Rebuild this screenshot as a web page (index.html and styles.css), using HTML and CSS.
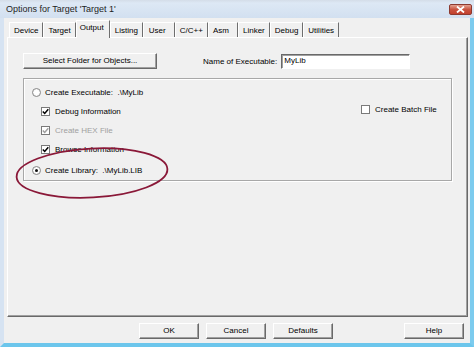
FILE: index.html
```html
<!DOCTYPE html>
<html lang="en">
<head>
    <meta charset="UTF-8">
    <title>Options for Target 'Target 1'</title>
    <link rel="stylesheet" href="styles.css">
</head>
<body>
    <div class="window">
        <div class="titlebar">
            <span class="title">Options for Target 'Target 1'</span>
            <span class="close">
                <svg width="9" height="7" viewBox="0 0 9 7"><path d="M1 0.5 L8 6.5 M8 0.5 L1 6.5" stroke="#fff" stroke-width="1.8"/></svg>
            </span>
        </div>
        <div class="frame">
            <div class="client">
                <div class="tabs">
                    <div class="tab">Device</div>
                    <div class="tab">Target</div>
                    <div class="tab active">Output</div>
                    <div class="tab">Listing</div>
                    <div class="tab wide">User</div>
                    <div class="tab">C/C++</div>
                    <div class="tab">Asm</div>
                    <div class="tab">Linker</div>
                    <div class="tab">Debug</div>
                    <div class="tab">Utilities</div>
                </div>

                <div class="panel">
                    <div class="top-row">
                        <div class="btn folder-btn">Select Folder for Objects...</div>
                        <span class="exe-label">Name of Executable:</span>
                        <div class="textbox">MyLib</div>
                    </div>

                    <div class="group">
                        <div class="options">
                            <div class="row">
                                <span class="radio"></span>
                                <span>Create Executable:&nbsp; .\MyLib</span>
                            </div>
                            <div class="row sub">
                                <span class="check"><svg width="7" height="7" viewBox="0 0 7 7"><path d="M0.8 3.4 L2.7 5.4 L6.3 1.2" fill="none" stroke="#000" stroke-width="1.5"/></svg></span>
                                <span>Debug Information</span>
                            </div>
                            <div class="row sub disabled">
                                <span class="check"><svg width="7" height="7" viewBox="0 0 7 7"><path d="M0.8 3.4 L2.7 5.4 L6.3 1.2" fill="none" stroke="#a0a0a0" stroke-width="1.5"/></svg></span>
                                <span>Create HEX File</span>
                            </div>
                            <div class="row sub">
                                <span class="check"><svg width="7" height="7" viewBox="0 0 7 7"><path d="M0.8 3.4 L2.7 5.4 L6.3 1.2" fill="none" stroke="#000" stroke-width="1.5"/></svg></span>
                                <span>Browse Information</span>
                            </div>
                            <div class="row lib">
                                <span class="radio on"></span>
                                <span>Create Library:&nbsp; .\MyLib.LIB</span>
                            </div>
                        </div>
                        <div class="side">
                            <div class="row">
                                <span class="check"></span>
                                <span>Create Batch File</span>
                            </div>
                        </div>
                    </div>
                </div>

                <div class="footer">
                    <div class="btn">OK</div>
                    <div class="btn">Cancel</div>
                    <div class="btn">Defaults</div>
                    <div class="btn help">Help</div>
                </div>
            </div>
        </div>

        <!-- hand drawn marker round the library option -->
        <svg class="marker" width="474" height="347" viewBox="0 0 474 347">
            <ellipse cx="92" cy="173" rx="75.5" ry="24.5" transform="rotate(-3 92 173)" fill="none" stroke="#8a1838" stroke-width="1.8"/>
        </svg>
    </div>
</body>
</html>
```

FILE: styles.css
```css
body {
    margin: 0;
    font-family: "Liberation Sans", Arial, sans-serif;
    font-size: 8px;
    color: #000;
}

.window {
    position: relative;
    width: 474px;
    height: 347px;
    display: flex;
    flex-direction: column;
    overflow: hidden;
}

.titlebar {
    height: 18px;
    flex: none;
    display: flex;
    align-items: flex-start;
    padding: 0 2px 0 6px;
    background: linear-gradient(#d4dde8 0, #dde8f5 3px, #d2e0f0 18px);
    box-sizing: border-box;
}

.title {
    font-size: 9px;
    line-height: 18px;
    color: #1e1e1e;
}

.close {
    margin-left: auto;
    margin-top: 4px;
    width: 23px;
    height: 11px;
    display: flex;
    align-items: center;
    justify-content: center;
    background: linear-gradient(#e3a291, #c9533f 50%, #c2402e);
    border: 1px solid #8c3a30;
    border-radius: 2px;
    box-sizing: border-box;
}

.frame {
    flex: 1;
    border-left: 4px solid #d6e3f2;
    border-right: 4px solid #7ccbee;
    border-bottom: 4px solid #6cc6ec;
    display: flex;
}

.client {
    flex: 1;
    background-color: #f0f0f0;
    padding: 0 2px 0 3px;
    display: flex;
    flex-direction: column;
}

/* tab strip */
.tabs {
    height: 19px;
    padding-left: 2px;
    display: flex;
    align-items: flex-end;
    box-sizing: border-box;
}

.tab {
    height: 15px;
    min-width: 30px;
    padding: 0 4px 0 4px;
    line-height: 15px;
    border-top: 1px solid #fff;
    border-left: 1px solid #fff;
    border-right: 1px solid #6e6e6e;
    box-sizing: border-box;
    background-color: #f0f0f0;
}

.tab.wide {
    min-width: 32px;
    padding-left: 5px;
}

.tab.active {
    position: relative;
    z-index: 1;
    height: 18px;
    margin-bottom: -1px;
    line-height: 14px;
    padding: 0 5px 0 3px;
}

.panel {
    height: 280px;
    border: 1px solid;
    border-color: #fff #696969 #696969 #fff;
    box-shadow: inset -1px -1px 0 #a0a0a0;
    padding: 15px 0 0 15px;
    box-sizing: border-box;
}

.top-row {
    display: flex;
    align-items: center;
    height: 16px;
}

.btn {
    width: 60px;
    height: 16px;
    line-height: 14px;
    text-align: center;
    border: 1px solid;
    border-color: #fff #696969 #696969 #fff;
    box-shadow: inset -1px -1px 0 #a0a0a0;
    background-color: #f0f0f0;
    box-sizing: border-box;
}

.folder-btn {
    width: 134px;
}

.exe-label {
    margin-left: 46px;
}

.textbox {
    margin-left: 4px;
    width: 129px;
    height: 15px;
    padding: 1px 0 0 2px;
    line-height: 9px;
    background-color: #fff;
    border: 1px solid;
    border-color: #696969 #fff #fff #696969;
    box-shadow: inset 1px 1px 0 #a0a0a0;
    box-sizing: border-box;
}

/* group of output options */
.group {
    margin-top: 9px;
    width: 429px;
    height: 103px;
    border: 1px solid #a8a8a8;
    box-shadow: inset 1px 1px 0 #fff, 1px 1px 0 #fff;
    display: flex;
    box-sizing: border-box;
}

.options {
    padding: 4px 0 0 8px;
}

.row {
    height: 19px;
    display: flex;
    align-items: center;
    gap: 4px;
}

.row.sub {
    padding-left: 9px;
    gap: 5px;
}

.row.lib {
    margin-top: 2px;
}

.row.disabled {
    color: #a0a0a0;
}

.side {
    margin-left: auto;
    width: 90px;
    padding-top: 21px;
}

.side .row {
    gap: 5px;
}

.radio {
    width: 9px;
    height: 9px;
    border: 1px solid #888;
    border-radius: 50%;
    background: radial-gradient(circle, #fff 40%, #e6e6e6);
    box-sizing: border-box;
    display: flex;
    align-items: center;
    justify-content: center;
    flex: none;
}

.radio.on::after {
    content: "";
    width: 3px;
    height: 3px;
    border-radius: 50%;
    background-color: #111;
}

.check {
    width: 9px;
    height: 9px;
    border: 1px solid #7a7a7a;
    background-color: #fff;
    box-sizing: border-box;
    display: flex;
    align-items: center;
    justify-content: center;
    flex: none;
}

.footer {
    height: 26px;
    padding: 6px 4px 0 132px;
    display: flex;
    gap: 7px;
    box-sizing: border-box;
}

.footer .help {
    margin-left: auto;
}

.marker {
    position: absolute;
    left: 0;
    top: 0;
    pointer-events: none;
}
```
